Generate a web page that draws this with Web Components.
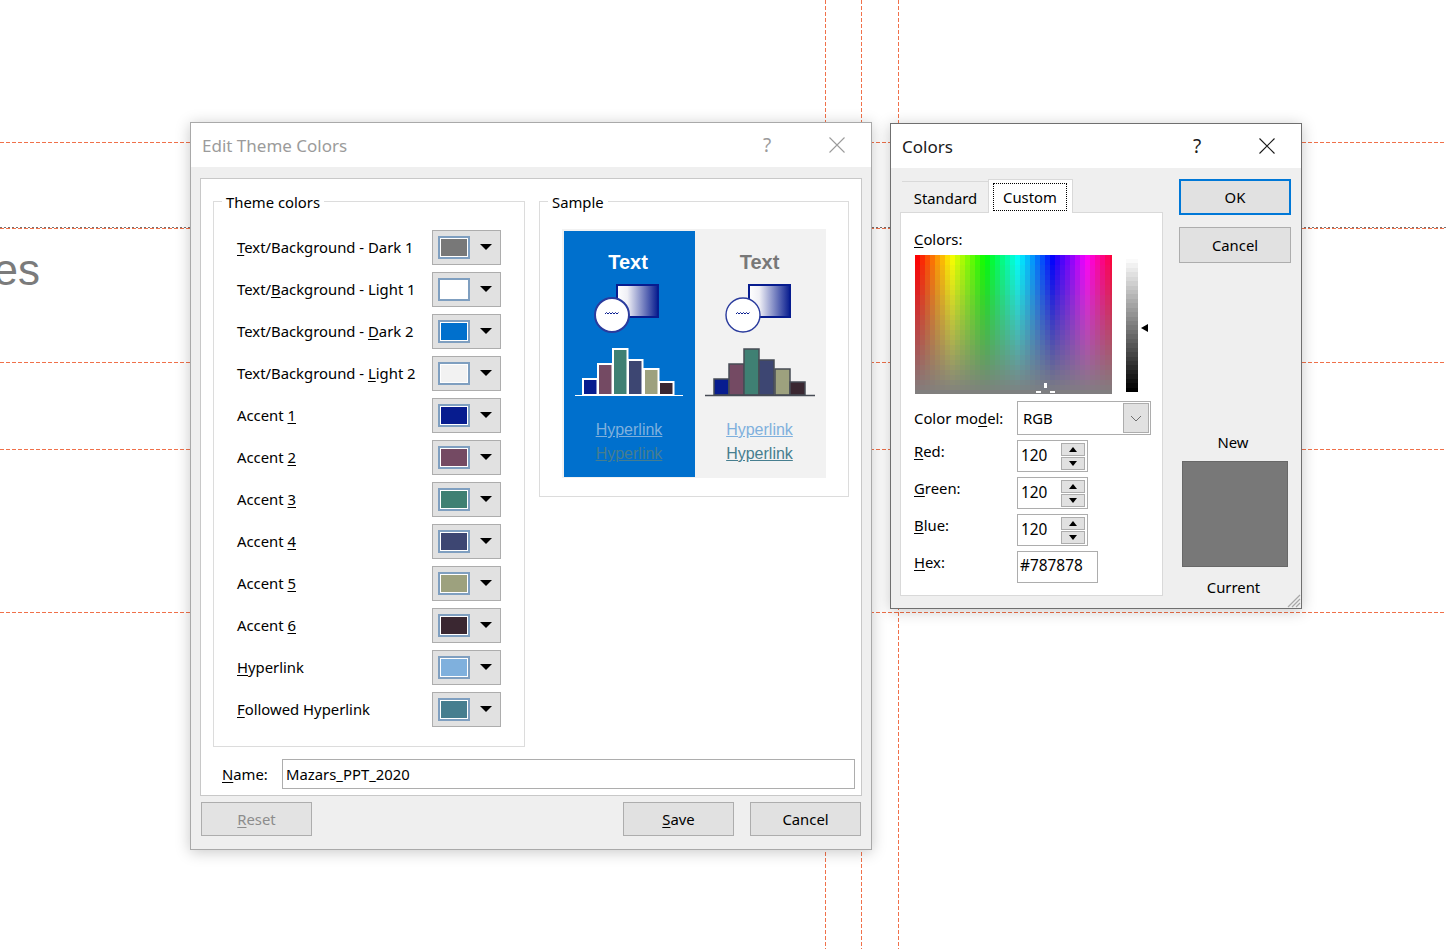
<!DOCTYPE html>
<html lang="en">
<head>
<meta charset="utf-8">
<title>Edit Theme Colors</title>
<style>
  html, body { margin: 0; padding: 0; background: #fff; }
  body { font-family: "Noto Sans", "Open Sans", sans-serif; font-size: 14.85px; color: #000; overflow: hidden; }
  u { text-underline-offset: 2px; text-decoration-thickness: 1px; }
</style>
</head>
<body>
<desk-page>
  <guide-line dir="h" at="142"></guide-line>
  <guide-line dir="h" at="228" double></guide-line>
  <guide-line dir="h" at="362"></guide-line>
  <guide-line dir="h" at="449"></guide-line>
  <guide-line dir="h" at="612"></guide-line>
  <guide-line dir="v" at="825"></guide-line>
  <guide-line dir="v" at="861"></guide-line>
  <guide-line dir="v" at="898"></guide-line>
  <slide-title>es</slide-title>

  <win-dialog heading="Edit Theme Colors" muted style="left:190px;top:122px;width:682px;height:728px">
    <theme-colors></theme-colors>
  </win-dialog>

  <win-dialog heading="Colors" dark style="left:890px;top:123px;width:412px;height:486px">
    <custom-colors></custom-colors>
  </win-dialog>
</desk-page>

<script>
class DeskPage extends HTMLElement {
  connectedCallback() {
    this.attachShadow({ mode: 'open' });
    this.shadowRoot.innerHTML = `
      <style>
        :host { display: block; position: relative; width: 1446px; height: 949px; overflow: hidden; background: #fff; }
      </style>
      <slot></slot>`;
  }
}

class GuideLine extends HTMLElement {
  connectedCallback() {
    this.attachShadow({ mode: 'open' });
    const at = this.getAttribute('at');
    const horizontal = this.getAttribute('dir') === 'h';
    const dir = horizontal ? '90deg' : '180deg';
    const box = horizontal
      ? `left:0;top:${at}px;width:100%;height:1px;`
      : `top:0;left:${at}px;height:100%;width:1px;`;
    const dash = `repeating-linear-gradient(${dir}, #f0714a 0 4px, transparent 4px 6px)`;
    const extra = this.hasAttribute('double')
      ? `<style>:host::before{content:"";position:absolute;left:0;right:0;top:-1px;height:1px;background:repeating-linear-gradient(90deg,#77706e 0 2px,transparent 2px 4px)}</style>`
      : '';
    this.shadowRoot.innerHTML = `
      <style>:host { position: absolute; ${box} background: ${dash}; }</style>${extra}`;
  }
}

class SlideTitle extends HTMLElement {
  connectedCallback() {
    this.attachShadow({ mode: 'open' });
    this.shadowRoot.innerHTML = `
      <style>
        :host { position: absolute; right: 1406px; top: 244px; font: 44px/52px "Liberation Sans", sans-serif; color: #7b7b7b; }
      </style>
      <slot></slot>`;
  }
}

class WinDialog extends HTMLElement {
  connectedCallback() {
    this.attachShadow({ mode: 'open' });
    const dark = this.hasAttribute('dark');
    const muted = this.hasAttribute('muted');
    const ink = muted ? '#9b9b9b' : '#1a1a1a';
    this.shadowRoot.innerHTML = `
      <style>
        :host {
          position: absolute; box-sizing: border-box; display: flex; flex-direction: column;
          background: #efefef; border: 1px solid ${dark ? '#6f6f6f' : '#a9a9a9'};
          box-shadow: 0 2px 14px rgba(0,0,0,.22);
        }
        .bar { height: 44px; flex: none; display: flex; align-items: center; background: #fff; color: ${ink}; }
        .title { flex: 1; padding-left: 11px; font-size: 17px; }
        .help { width: 72px; text-align: center; font-size: 19px; }
        .close { width: 68px; display: flex; justify-content: center; }
        .close svg { display: block; }
        .body { flex: 1; min-height: 0; }
      </style>
      <div class="bar">
        <span class="title">${this.getAttribute('heading')}</span>
        <span class="help">?</span>
        <span class="close">
          <svg width="16" height="16" viewBox="0 0 16 16"><path d="M.5.5l15 15M15.5.5l-15 15" stroke="${ink}" stroke-width="1.1" fill="none"/></svg>
        </span>
      </div>
      <div class="body"><slot></slot></div>`;
  }
}

class GroupBox extends HTMLElement {
  connectedCallback() {
    this.attachShadow({ mode: 'open' });
    this.shadowRoot.innerHTML = `
      <style>
        :host { display: block; position: relative; box-sizing: border-box; border: 1px solid #dcdcdc; }
        .legend { position: absolute; left: 8px; top: -11px; padding: 0 4px; background: #fff; line-height: 22px; }
      </style>
      <span class="legend">${this.getAttribute('label')}</span>
      <slot></slot>`;
  }
}

class DlgButton extends HTMLElement {
  connectedCallback() {
    this.attachShadow({ mode: 'open' });
    this.shadowRoot.innerHTML = `
      <style>
        :host {
          display: flex; align-items: center; justify-content: center; box-sizing: border-box;
          width: 111px; height: 34px; background: #e1e1e1; border: 1px solid #adadad;
        }
        :host([disabled]) { color: #8c8c8c; background: #e3e3e3; }
        :host([primary]) { width: 112px; height: 36px; border: 2px solid #0078d7; }
        :host([wide]) { width: 112px; height: 36px; }
      </style>
      <slot></slot>`;
  }
}

class ColorRow extends HTMLElement {
  connectedCallback() {
    this.attachShadow({ mode: 'open' });
    this.shadowRoot.innerHTML = `
      <style>
        :host { display: flex; align-items: center; justify-content: space-between; height: 35px; }
        .label { white-space: nowrap; margin-top: -2px; }
        .btn {
          box-sizing: border-box; width: 69px; height: 35px; background: #e1e1e1; border: 1px solid #adadad;
          display: flex; align-items: center; padding-left: 5px;
        }
        .chip { box-sizing: border-box; width: 32px; height: 23px; border: 2px solid #7f9fc0; box-shadow: inset 0 0 0 1px #fff; background: ${this.getAttribute('color')}; }
        .arrow { margin-left: 10px; width: 0; height: 0; border: 6px solid transparent; border-top: 6px solid #000; border-bottom: 0; margin-top: -2px; }
      </style>
      <span class="label"><slot></slot></span>
      <div class="btn"><div class="chip"></div><div class="arrow"></div></div>`;
  }
}

class SamplePane extends HTMLElement {
  connectedCallback() {
    this.attachShadow({ mode: 'open' });
    const light = this.hasAttribute('light');
    const line = light ? '#474c55' : '#fff';
    const bars = [
      [19, 99, '#071c8f'], [34, 84, '#744a63'], [49, 69, '#3f8073'],
      [64, 80, '#3d4672'], [80, 89, '#9da17e'], [95, 102, '#3a2731']
    ];
    const rects = bars.map(b =>
      `<rect x="${b[0]}" y="${b[1]}" width="${light ? 15 : 14.5}" height="${115 - b[1]}" fill="${b[2]}" stroke="${line}" stroke-width="${light ? 1.5 : 2}"/>`
    ).join('');
    const boxX = light ? 54 : 53;
    const cx = 48;
    const id = light ? 'gl' : 'gd';
    this.shadowRoot.innerHTML = `
      <style>
        :host {
          display: flex; flex-direction: column; align-items: center; box-sizing: border-box; flex: none;
          width: ${light ? 129 : 131}px; height: 246px; padding: 19px ${light ? 0 : 1}px 0 0;
          background: ${light ? '#f2f2f2' : '#0070cd'};
          font-family: "Liberation Sans", sans-serif;
        }
        .big { font-size: 20px; line-height: 24px; font-weight: 700; color: ${light ? '#787878' : '#fff'}; ${light ? '' : 'margin-right: 2px;'} }
        svg { display: block; margin-top: 6px; align-self: flex-start; }
        .links { margin-top: 20px; font-size: 16px; line-height: 24px; text-align: center; }
        .links a { display: block; text-decoration: underline; }
        .h { color: #7fb0dd; }
        .f { color: #467e8f; }
      </style>
      <div class="big">Text</div>
      <svg width="129" height="118" viewBox="0 0 129 118" style="overflow:visible">
        <defs>
          <linearGradient id="${id}"><stop offset="0" stop-color="#fff"/><stop offset=".25" stop-color="#f0f0f6"/><stop offset="1" stop-color="#071c8f"/></linearGradient>
        </defs>
        <rect x="${boxX}" y="5" width="41" height="32" fill="url(#${id})" stroke="#071c8f" stroke-width="2"/>
        <circle cx="${cx}" cy="35" r="17" fill="#fff" stroke="#2a3b9d" stroke-width="${light ? 1.4 : 2}"/>
        <path d="M${cx - 7} 34l1.5-1.5 1.5 1.5 1.5-1.5 1.5 1.5 1.5-1.5 1.5 1.5 1.5-1.5 1.5 1.5 1.5-1.5" fill="none" stroke="#071c8f" stroke-width="1"/>
        ${rects}
        <path d="M${light ? 10 : 11} 115.5H${light ? 120 : 119}" stroke="${line}" stroke-width="${light ? 1.5 : 1}"/>
      </svg>
      <div class="links"><a class="h">Hyperlink</a><a class="f">Hyperlink</a></div>`;
  }
}

class ThemeColors extends HTMLElement {
  connectedCallback() {
    this.attachShadow({ mode: 'open' });
    const rows = [
      ['<u>T</u>ext/Background - Dark 1', '#787878'],
      ['Text/<u>B</u>ackground - Light 1', '#ffffff'],
      ['Text/Background - <u>D</u>ark 2', '#0070cd'],
      ['Text/Background - <u>L</u>ight 2', '#f2f2f2'],
      ['Accent <u>1</u>', '#071c8f'],
      ['Accent <u>2</u>', '#744a63'],
      ['Accent <u>3</u>', '#3f8073'],
      ['Accent <u>4</u>', '#3d4672'],
      ['Accent <u>5</u>', '#9da17e'],
      ['Accent <u>6</u>', '#3a2731'],
      ['<u>H</u>yperlink', '#7fb0dd'],
      ['<u>F</u>ollowed Hyperlink', '#467e8f']
    ];
    this.shadowRoot.innerHTML = `
      <style>
        :host { display: flex; flex-direction: column; height: 100%; padding: 11px 9px 0; box-sizing: border-box; }
        u { text-underline-offset: 2px; text-decoration-thickness: 1px; }
        .panel { box-sizing: border-box; width: 662px; height: 618px; background: #fff; border: 1px solid #c8c8c8; padding: 22px 0 0 12px; flex: none; }
        .groups { display: flex; align-items: flex-start; gap: 14px; }
        .theme { width: 312px; height: 546px; }
        .rows { display: flex; flex-direction: column; gap: 7px; padding: 28px 23px 0 23px; }
        .sample { width: 310px; height: 296px; }
        .frame { display: flex; box-sizing: border-box; width: 264px; height: 249px; padding: 2px 2px 1px 2px; margin: 27px 0 0 22px; background: #f2f2f2; }
        .name { display: flex; align-items: center; margin: 12px 0 0 9px; }
        .name label { width: 60px; flex: none; }
        .field { box-sizing: border-box; flex: none; width: 573px; height: 30px; border: 1px solid #adadad; padding-left: 3px; display: flex; align-items: center; }
        .foot { display: flex; gap: 16px; margin: 6px 1px 0 1px; }
        .foot .first { margin-right: auto; }
      </style>
      <div class="panel">
        <div class="groups">
          <group-box class="theme" label="Theme colors">
            <div class="rows">
              ${rows.map(r => `<color-row color="${r[1]}">${r[0]}</color-row>`).join('')}
            </div>
          </group-box>
          <group-box class="sample" label="Sample">
            <div class="frame">
              <sample-pane></sample-pane>
              <sample-pane light></sample-pane>
            </div>
          </group-box>
        </div>
        <div class="name">
          <label><u>N</u>ame:</label>
          <div class="field">Mazars_PPT_2020</div>
        </div>
      </div>
      <div class="foot">
        <dlg-button class="first" disabled><u>R</u>eset</dlg-button>
        <dlg-button><u>S</u>ave</dlg-button>
        <dlg-button>Cancel</dlg-button>
      </div>`;
  }
}

class SpectrumBox extends HTMLElement {
  connectedCallback() {
    this.attachShadow({ mode: 'open' });
    this.shadowRoot.innerHTML = `
      <style>
        :host { display: block; position: relative; width: 197px; height: 139px; }
        canvas { display: block; }
        i { position: absolute; background: #fff; }
      </style>
      <canvas width="197" height="139"></canvas>
      <i style="left:129px;top:128px;width:3px;height:5px"></i>
      <i style="left:121px;top:136px;width:5px;height:2px"></i>
      <i style="left:135px;top:136px;width:5px;height:2px"></i>`;
    const g = this.shadowRoot.querySelector('canvas').getContext('2d');
    const step = 5;
    for (let x = 0; x < 197; x += step) {
      for (let y = 0; y < 139; y += step) {
        const hue = Math.round(x / 197 * 350);
        const sat = Math.round(100 - (y + step / 2) / 139 * 100);
        g.fillStyle = `hsl(${hue}, ${sat}%, 50%)`;
        g.fillRect(x, y, step, step);
      }
    }
  }
}

class LumBar extends HTMLElement {
  connectedCallback() {
    this.attachShadow({ mode: 'open' });
    const stops = [];
    const n = 30;
    for (let i = 0; i < n; i++) {
      const v = Math.round(250 - 250 * i / (n - 1));
      stops.push(`rgb(${v},${v},${v}) ${i / n * 100}% ${(i + 1) / n * 100}%`);
    }
    this.shadowRoot.innerHTML = `
      <style>
        :host { display: block; position: relative; width: 12px; height: 133px; background: linear-gradient(180deg, ${stops.join(',')}); }
        i { position: absolute; left: 15px; top: 65px; width: 0; height: 0; border: 4.5px solid transparent; border-right: 7px solid #000; border-left: 0; }
      </style>
      <i></i>`;
  }
}

class SpinField extends HTMLElement {
  connectedCallback() {
    this.attachShadow({ mode: 'open' });
    this.shadowRoot.innerHTML = `
      <style>
        :host { display: flex; align-items: center; box-sizing: border-box; width: 71px; height: 32px; border: 1px solid #adadad; padding: 2px 2px 2px 3px; background: #fff; }
        .val { flex: 1; font-size: 15.4px; margin-top: -2px; }
        .spin { display: flex; flex-direction: column; gap: 1px; }
        .spin b { box-sizing: border-box; display: flex; align-items: center; justify-content: center; width: 24px; height: 13px; background: #e1e1e1; border: 1px solid #adadad; }
        .up { border: 4.5px solid transparent; border-bottom: 5px solid #000; border-top: 0; }
        .dn { border: 4.5px solid transparent; border-top: 5px solid #000; border-bottom: 0; }
      </style>
      <span class="val"><slot></slot></span>
      <div class="spin"><b><i class="up"></i></b><b><i class="dn"></i></b></div>`;
  }
}

class CustomColors extends HTMLElement {
  connectedCallback() {
    this.attachShadow({ mode: 'open' });
    this.shadowRoot.innerHTML = `
      <style>
        :host { display: flex; position: relative; height: 100%; box-sizing: border-box; padding: 11px 10px 0 9px; gap: 16px; }
        u { text-underline-offset: 2px; text-decoration-thickness: 1px; }
        .left { width: 263px; flex: none; }
        .tabs { display: flex; align-items: flex-end; height: 34px; margin-bottom: -1px; position: relative; padding-left: 2px; }
        .tab { box-sizing: border-box; display: flex; align-items: center; justify-content: center; }
        .std { width: 86px; height: 32px; border-top: 1px solid #d9d9d9; padding: 1px 0 0 1px; }
        .cus { width: 85px; height: 34px; background: #fff; border: 1px solid #d9d9d9; border-bottom: 0; padding: 3px 5px 2px 4px; position: relative; z-index: 1; }
        .cus span { flex: 1; height: 100%; display: flex; align-items: center; justify-content: center; border: 1px dotted #000; box-sizing: border-box; }
        .panel { box-sizing: border-box; height: 384px; background: #fff; border: 1px solid #d9d9d9; padding: 14px 0 0 13px; }
        .lbl { line-height: 24px; height: 28px; }
        .pick { display: flex; margin-left: 1px; height: 146px; }
        lum-bar { margin: 4px 0 0 14px; }
        .form { display: grid; grid-template-columns: 103px auto; row-gap: 5px; justify-items: start; }
        .form .t { line-height: 22px; }
        .combo { box-sizing: border-box; width: 134px; height: 34px; border: 1px solid #adadad; display: flex; align-items: center; padding: 1px; }
        .combo span { flex: 1; padding-left: 4px; }
        .combo b { box-sizing: border-box; display: flex; align-items: center; justify-content: center; width: 26px; height: 30px; background: #e1e1e1; border: 1px solid #adadad; }
        .hex { box-sizing: border-box; width: 81px; height: 32px; border: 1px solid #adadad; padding: 0 0 3px 2px; display: flex; align-items: center; font-size: 15.4px; }
        .right { width: 112px; flex: none; display: flex; flex-direction: column; gap: 12px; }
        .swatch { box-sizing: border-box; width: 106px; height: 106px; margin: 6px 0 0 3px; background: #787878; border: 1px solid #686868; }
        .cur { text-align: center; line-height: 22px; margin-top: 9px; margin-bottom: 10px; padding-right: 3px; }
        .stack { display: flex; flex-direction: column; margin-top: auto; }
        .new { text-align: center; line-height: 22px; padding-right: 4px; margin-bottom: 2px; }
        .grip { position: absolute; right: 0; bottom: 0; display: block; }
      </style>
      <div class="left">
        <div class="tabs">
          <div class="tab std">Standard</div>
          <div class="tab cus"><span>Custom</span></div>
        </div>
        <div class="panel">
          <div class="lbl"><u>C</u>olors:</div>
          <div class="pick">
            <spectrum-box></spectrum-box>
            <lum-bar></lum-bar>
          </div>
          <div class="form">
            <div class="t" style="align-self:center">Color mo<u>d</u>el:</div>
            <div class="combo"><span>RGB</span><b>
              <svg width="12" height="7" viewBox="0 0 12 7"><path d="M1 1l5 5 5-5" fill="none" stroke="#6e6e6e"/></svg>
            </b></div>
            <div class="t"><u>R</u>ed:</div><spin-field>120</spin-field>
            <div class="t"><u>G</u>reen:</div><spin-field>120</spin-field>
            <div class="t"><u>B</u>lue:</div><spin-field>120</spin-field>
            <div class="t"><u>H</u>ex:</div><div class="hex">#787878</div>
          </div>
        </div>
      </div>
      <div class="right">
        <dlg-button primary>OK</dlg-button>
        <dlg-button wide>Cancel</dlg-button>
        <div class="stack">
          <div class="new">New</div>
          <div class="swatch"></div>
          <div class="cur">Current</div>
        </div>
      </div>
      <svg class="grip" width="14" height="14" viewBox="0 0 14 14"><path d="M13 1L1 13M13 5L5 13M13 9L9 13" stroke="#a8a8a8" stroke-width="1.2" fill="none"/></svg>`;
  }
}

customElements.define('desk-page', DeskPage);
customElements.define('guide-line', GuideLine);
customElements.define('slide-title', SlideTitle);
customElements.define('win-dialog', WinDialog);
customElements.define('group-box', GroupBox);
customElements.define('dlg-button', DlgButton);
customElements.define('color-row', ColorRow);
customElements.define('sample-pane', SamplePane);
customElements.define('theme-colors', ThemeColors);
customElements.define('spectrum-box', SpectrumBox);
customElements.define('lum-bar', LumBar);
customElements.define('spin-field', SpinField);
customElements.define('custom-colors', CustomColors);
</script>
</body>
</html>
